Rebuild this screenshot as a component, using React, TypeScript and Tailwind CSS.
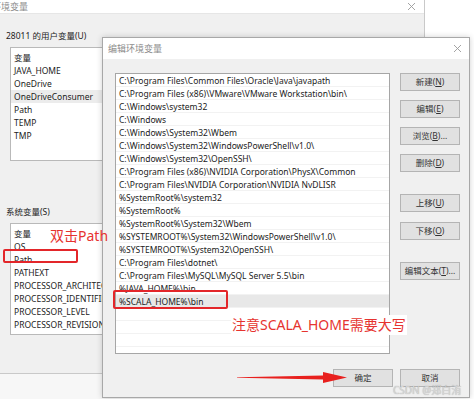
import React from 'react';

const font = "font-['Noto_Sans','Noto_Sans_CJK_SC',sans-serif]";

const userVars = ['变量', 'JAVA_HOME', 'OneDrive', 'OneDriveConsumer', 'Path', 'TEMP', 'TMP'];
const sysVars = [
  '变量',
  'OS',
  'Path',
  'PATHEXT',
  'PROCESSOR_ARCHITECTURE',
  'PROCESSOR_IDENTIFIER',
  'PROCESSOR_LEVEL',
  'PROCESSOR_REVISION',
  'PSModulePath',
];

const paths = [
  'C:\\Program Files\\Common Files\\Oracle\\Java\\javapath',
  'C:\\Program Files (x86)\\VMware\\VMware Workstation\\bin\\',
  'C:\\Windows\\system32',
  'C:\\Windows',
  'C:\\Windows\\System32\\Wbem',
  'C:\\Windows\\System32\\WindowsPowerShell\\v1.0\\',
  'C:\\Windows\\System32\\OpenSSH\\',
  'C:\\Program Files (x86)\\NVIDIA Corporation\\PhysX\\Common',
  'C:\\Program Files\\NVIDIA Corporation\\NVIDIA NvDLISR',
  '%SystemRoot%\\system32',
  '%SystemRoot%',
  '%SystemRoot%\\System32\\Wbem',
  '%SYSTEMROOT%\\System32\\WindowsPowerShell\\v1.0\\',
  '%SYSTEMROOT%\\System32\\OpenSSH\\',
  'C:\\Program Files\\dotnet\\',
  'C:\\Program Files\\MySQL\\MySQL Server 5.5\\bin',
  '%JAVA_HOME%\\bin',
  '%SCALA_HOME%\\bin',
  '',
  '',
  '',
  '',
];

function CloseIcon() {
  return (
    <svg width="9" height="9" viewBox="0 0 9 9" className="shrink-0">
      <path d="M1 1 L8 8 M8 1 L1 8" stroke="#9a9a9a" strokeWidth="0.9" />
    </svg>
  );
}

function WinButton({ label, k, tail = '' }: { label: string; k: string; tail?: string }) {
  return (
    <div className="h-[18px] w-[60px] bg-[#e1e1e1] border border-[#b4b4b4] flex items-center justify-center text-[8.5px] text-[#333]">
      {label}(<span className="underline">{k}</span>){tail}
    </div>
  );
}

function VarList({ items, selected, height }: { items: string[]; selected?: number; height: string }) {
  return (
    <div className={`ml-[4px] w-[220px] ${height} bg-white border border-[#b9b9b9] overflow-hidden pt-[3px]`}>
      {items.map((v, i) => (
        <div
          key={i}
          className={`h-[13px] leading-[13px] pl-[3px] text-[8.5px] text-[#222] whitespace-nowrap ${
            i === selected ? 'bg-[#ececec]' : ''
          }`}
        >
          {v}
        </div>
      ))}
    </div>
  );
}

export default function App() {
  return (
    <div className={`relative w-[474px] h-[399px] overflow-hidden bg-[#f7f7f7] ${font}`}>
      {/* window further behind, on the right */}
      <div className="absolute left-[424px] top-0 w-[60px] h-[399px] bg-white" />

      {/* Back window: 环境变量 */}
      <div className="absolute left-[-10px] top-0 w-[435px] h-[374px] bg-[#f0f0f0] border-r border-b border-[#c9c9c9] flex flex-col">
        <div className="h-[14px] bg-white flex items-center justify-between pl-[2px] pr-[8px] border-b border-[#e6e6e6]">
          <span className="text-[9px] text-[#8c8c8c] leading-none">环境变量</span>
          <CloseIcon />
        </div>
        <div className="pl-[16px] flex flex-col">
          <div className="mt-[17px] h-[10px] leading-[10px] text-[8.5px] text-[#222]">28011 的用户变量(U)</div>
          <div className="mt-[6px]">
            <VarList items={userVars} selected={3} height="h-[114px]" />
          </div>
          <div className="mt-[46px] h-[10px] leading-[10px] text-[8.5px] text-[#222]">系统变量(S)</div>
          <div className="mt-[6px]">
            <VarList items={sysVars} height="h-[112px]" />
          </div>
        </div>
      </div>

      {/* Front dialog: 编辑环境变量 */}
      <div className="absolute left-[102px] top-[37px] w-[368px] h-[361px] bg-[#f0f0f0] border border-[#a8a8a8] shadow-[0_0_6px_rgba(0,0,0,0.18)] flex flex-col">
        <div className="h-[21px] bg-white flex items-center justify-between pl-[5px] pr-[7px]">
          <span className="text-[9px] text-[#8c8c8c] leading-none">编辑环境变量</span>
          <CloseIcon />
        </div>
        <div className="flex pt-[14px] pl-[12px]">
          <div className="w-[275px] h-[281px] bg-white border border-[#a6a6a6] overflow-hidden">
            {paths.map((p, i) => (
              <div
                key={i}
                className={`h-[13px] leading-[13px] pl-[3px] text-[8.5px] text-[#222] whitespace-nowrap border-b border-[#f2f2f2] ${
                  i === 17 ? 'bg-[#e8e8e8]' : ''
                }`}
              >
                {p}
              </div>
            ))}
          </div>
          <div className="ml-[10px] flex flex-col">
            <div className="flex flex-col gap-[9px]">
              <WinButton label="新建" k="N" />
              <WinButton label="编辑" k="E" />
              <WinButton label="浏览" k="B" tail="..." />
              <WinButton label="删除" k="D" />
            </div>
            <div className="mt-[22px] flex flex-col gap-[10px]">
              <WinButton label="上移" k="U" />
              <WinButton label="下移" k="O" />
            </div>
            <div className="mt-[22px]">
              <WinButton label="编辑文本" k="T" tail="..." />
            </div>
          </div>
        </div>
        <div className="mt-[15px] flex justify-end gap-[7px] pr-[9px]">
          <div className="h-[18px] w-[60px] bg-[#e1e1e1] border border-[#b4b4b4] flex items-center justify-center text-[8.5px] text-[#333]">
            确定
          </div>
          <div className="h-[18px] w-[60px] bg-[#e1e1e1] border border-[#b4b4b4] flex items-center justify-center text-[8.5px] text-[#333]">
            取消
          </div>
        </div>
      </div>

      {/* Annotations */}
      <div className="absolute left-[3px] top-[249px] w-[75px] h-[14px] border-2 border-[#e3262a] rounded-[2px]" />
      <div className="absolute left-[50px] top-[227px] text-[14px] leading-[18px] text-[#e6332f] whitespace-nowrap">双击Path</div>
      <div className="absolute left-[113px] top-[290px] w-[115px] h-[19px] border-2 border-[#e3262a] rounded-[2px]" />
      <div className="absolute left-[231px] top-[315px] px-[1px] bg-white text-[14px] leading-[20px] text-[#e6332f] whitespace-nowrap">
        注意SCALA_HOME需要大写
      </div>
      <svg className="absolute left-[235px] top-[370px]" width="115" height="15" viewBox="0 0 115 15">
        <polygon points="2,7.2 88,5.6 88,2 112,7.5 88,13 88,9.4 2,7.8" fill="#e8201e" />
      </svg>
      <div className="absolute left-[393px] top-[383px] text-[10px] leading-[14px] text-[#d8d8d8] [text-shadow:0_0_1px_rgba(0,0,0,0.35)] whitespace-nowrap">
        CSDN @郑白洧
      </div>
    </div>
  );
}
